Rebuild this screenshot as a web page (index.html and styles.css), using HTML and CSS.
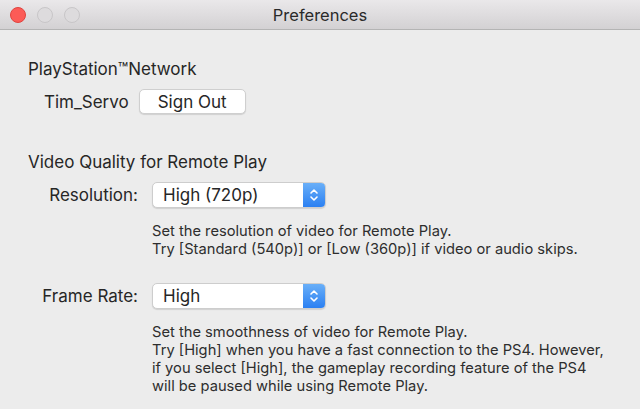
FILE: index.html
```html
<!DOCTYPE html>
<html lang="en">
<head>
    <meta charset="UTF-8">
    <meta name="viewport" content="width=device-width, initial-scale=1.0">
    <title>Preferences</title>
    <link rel="stylesheet" href="styles.css">
</head>
<body>
    <div class="window">
        <div class="titlebar">
            <div class="lights">
                <span class="light close"></span>
                <span class="light off"></span>
                <span class="light off"></span>
            </div>
            <div class="title">Preferences</div>
            <div></div>
        </div>

        <div class="content">
            <h2 class="heading">PlayStation™Network</h2>
            <div class="account">
                <span class="user">Tim_Servo</span>
                <button class="btn">Sign Out</button>
            </div>

            <h2 class="heading second">Video Quality for Remote Play</h2>

            <div class="field">
                <label class="label">Resolution:</label>
                <div class="popup">
                    <span class="popup-value">High (720p)</span>
                    <span class="stepper">
                        <svg width="10" height="16" viewBox="0 0 10 16">
                            <path d="M2 6 L5 3 L8 6 M2 10 L5 13 L8 10" fill="none" stroke="#fff" stroke-width="1.6" stroke-linecap="round" stroke-linejoin="round"/>
                        </svg>
                    </span>
                </div>
                <p class="help">Set the resolution of video for Remote Play.<br>Try [Standard (540p)] or [Low (360p)] if video or audio skips.</p>
            </div>

            <div class="field">
                <label class="label">Frame Rate:</label>
                <div class="popup">
                    <span class="popup-value">High</span>
                    <span class="stepper">
                        <svg width="10" height="16" viewBox="0 0 10 16">
                            <path d="M2 6 L5 3 L8 6 M2 10 L5 13 L8 10" fill="none" stroke="#fff" stroke-width="1.6" stroke-linecap="round" stroke-linejoin="round"/>
                        </svg>
                    </span>
                </div>
                <p class="help">Set the smoothness of video for Remote Play.<br>Try [High] when you have a fast connection to the PS4. However,<br>if you select [High], the gameplay recording feature of the PS4<br>will be paused while using Remote Play.</p>
            </div>
        </div>
    </div>
</body>
</html>
```

FILE: styles.css
```css
body {
    margin: 0;
    background-color: #ececec;
    font-family: Inter, "Liberation Sans", sans-serif;
    color: #262626;
}

.window {
    width: 640px;
    height: 409px;
    overflow: hidden;
}

.titlebar {
    height: 29px;
    display: grid;
    grid-template-columns: 1fr auto 1fr;
    align-items: center;
    background: linear-gradient(#eae8ea, #d3d1d3);
    border-bottom: 1px solid #b4b4b4;
}

.lights {
    display: flex;
    gap: 11px;
    padding-left: 10px;
}

.light {
    width: 16px;
    height: 16px;
    border-radius: 50%;
    box-sizing: border-box;
}

.light.close {
    background-color: #fc5b57;
    border: 1px solid #e0443e;
}

.light.off {
    background-color: #dddbdd;
    border: 1px solid #c8c6c8;
}

.title {
    font-size: 16.5px;
    color: #2a2a2a;
}

.content {
    padding: 0 28px;
}

.heading {
    font-size: 17px;
    font-weight: normal;
    margin: 29px 0 0;
    line-height: 20px;
}

.heading.second {
    margin-top: 38px;
}

.account {
    display: flex;
    align-items: center;
    gap: 10px;
    padding-left: 16px;
    margin-top: 10px;
}

.user {
    font-size: 17px;
    line-height: 20px;
}

.btn {
    width: 107px;
    height: 25px;
    font-family: inherit;
    font-size: 17px;
    color: #262626;
    background-color: #fff;
    border: 1px solid #cfcfcf;
    border-radius: 5px;
    box-shadow: 0 1px 1px rgba(0, 0, 0, 0.12);
    padding: 0;
}

.field {
    display: grid;
    grid-template-columns: 110px 174px;
    column-gap: 14px;
    align-items: center;
    margin-top: 10px;
}

.field + .field {
    margin-top: 25px;
}

.label {
    text-align: right;
    font-size: 17px;
    line-height: 20px;
}

.popup {
    height: 26px;
    box-sizing: border-box;
    display: flex;
    align-items: center;
    background-color: #fff;
    border: 1px solid #cdcdcd;
    border-radius: 5px;
    box-shadow: 0 1px 1px rgba(0, 0, 0, 0.12);
    overflow: hidden;
}

.popup-value {
    flex: 1;
    padding-left: 10px;
    font-size: 17px;
}

.stepper {
    width: 22px;
    height: 100%;
    display: flex;
    align-items: center;
    justify-content: center;
    background: linear-gradient(#69aff8, #2b80f2);
}

.help {
    grid-column: 2 / 4;
    margin: 14px 0 0;
    font-size: 14.7px;
    line-height: 18px;
    color: #2e2e2e;
    white-space: nowrap;
}
```
